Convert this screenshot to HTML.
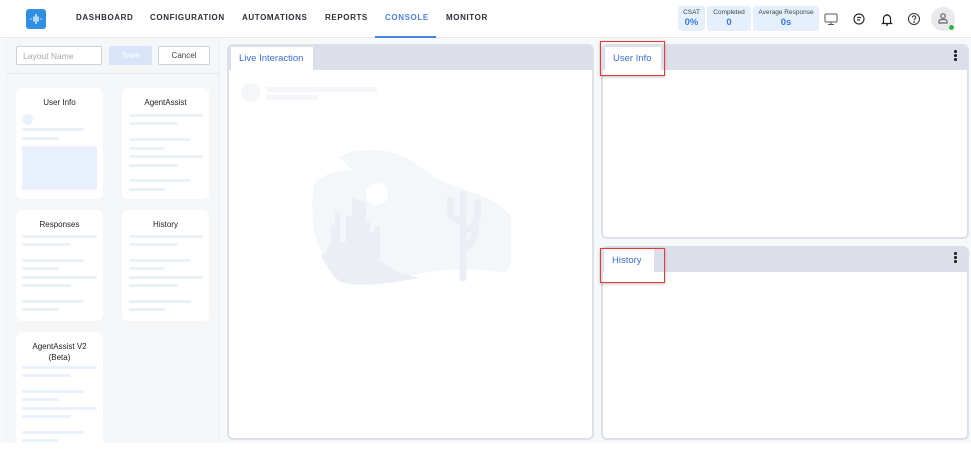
<!DOCTYPE html>
<html><head><meta charset="utf-8"><style>
*{box-sizing:border-box;margin:0;padding:0}
body{width:971px;height:451px;background:#fff;font-family:"Liberation Sans",sans-serif;position:relative;overflow:hidden}
.a{position:absolute}
.nav{position:absolute;top:13px;font-size:8px;font-weight:bold;letter-spacing:.6px;color:#2b2f38}
.stat{position:absolute;top:6px;height:25px;background:#e6f0fc;border-radius:3px;text-align:center;font-size:6.5px;color:#444;padding-top:3px}
.stat b{display:block;color:#3a7be0;font-size:9.5px;font-weight:bold;margin-top:1px}
.card{position:absolute;background:#fff;border-radius:6px;width:87px;height:111px}
.card .t{text-align:center;font-size:8px;color:#222;margin-top:9px;line-height:11px}
.ln{position:absolute;height:3px;background:#e8f1fc;border-radius:2px}
.panel{position:absolute;border:2.5px solid #dde0ea;border-radius:6px;background:#fff;overflow:hidden}
.ph{position:absolute;left:0;right:0;top:0;height:24px;background:#dcdfea}
.tab{position:absolute;top:1px;height:23px;background:#fff;font-size:9.5px;color:#3b6fd8;padding:6px 8px 0}
.red{position:absolute;border:1.5px solid #e53935;box-shadow:0 1px 3px rgba(0,0,0,.25)}
.dots{position:absolute;right:10px;top:4px;width:3px}
.dots i{display:block;width:2.5px;height:2.5px;background:#222;border-radius:50%;margin-bottom:1.5px}
</style></head><body>
<div class="a" style="left:0;top:38px;width:971px;height:405px;background:#f7f8fa"></div>
<div class="a" style="left:0;top:37px;width:971px;height:1px;background:#e6e8ee"></div>
<div class="a" style="left:26px;top:9px;width:20px;height:20px;background:#2f8fe3;border-radius:3px">
<svg width="20" height="20" viewBox="0 0 20 20"><g stroke="#fff" stroke-width="1.3" stroke-linecap="round"><path d="M5 10v0M8 8v4M10 5.5v9M12 8v4M15 10v0"/></g></svg></div>
<div class="nav" style="left:76px">DASHBOARD</div>
<div class="nav" style="left:150px">CONFIGURATION</div>
<div class="nav" style="left:242px">AUTOMATIONS</div>
<div class="nav" style="left:325px">REPORTS</div>
<div class="nav" style="left:385px;color:#4a82e0">CONSOLE</div>
<div class="nav" style="left:446px">MONITOR</div>
<div class="a" style="left:375px;top:36px;width:61px;height:1.5px;background:#4a82e0"></div>
<div class="stat" style="left:678px;width:27px">CSAT<b>0%</b></div>
<div class="stat" style="left:707px;width:44px">Completed<b>0</b></div>
<div class="stat" style="left:753px;width:66px">Average Response<b>0s</b></div>
<svg class="a" style="left:823px;top:11px" width="16" height="16" viewBox="0 0 16 16" fill="none" stroke="#555" stroke-width="1"><rect x="2" y="3" width="12" height="8" rx="1"/><path d="M8 11v2M5 13.5h6"/></svg>
<svg class="a" style="left:851px;top:11px" width="16" height="16" viewBox="0 0 16 16" fill="none" stroke="#333" stroke-width="1.2"><circle cx="8" cy="8" r="5"/><path d="M6 6.5h4M6 9h3"/></svg>
<svg class="a" style="left:879px;top:11px" width="16" height="16" viewBox="0 0 16 16" fill="none" stroke="#222" stroke-width="1.2"><path d="M4.5 11.5V7.5a3.5 3.5 0 0 1 7 0v4l1 1h-9zM7 14h2M8 3v1"/></svg>
<svg class="a" style="left:906px;top:11px" width="16" height="16" viewBox="0 0 16 16" fill="none" stroke="#333" stroke-width="1"><circle cx="8" cy="8" r="5.5"/><path d="M6.3 6.5a1.7 1.7 0 1 1 2.3 1.6c-.5.2-.6.6-.6 1.1"/><circle cx="8" cy="11" r=".4" fill="#333"/></svg>
<div class="a" style="left:931px;top:7px;width:24px;height:24px;border-radius:50%;background:#e8e9ec"></div>
<svg class="a" style="left:937px;top:12px" width="12" height="12" viewBox="0 0 12 12" fill="none" stroke="#666" stroke-width="1.2"><circle cx="6" cy="4" r="2.2"/><path d="M2 11v-1.5a2 2 0 0 1 2-2h4a2 2 0 0 1 2 2V11z"/></svg>
<div class="a" style="left:949px;top:25px;width:5px;height:5px;border-radius:50%;background:#2fb344"></div>

<div class="a" style="left:6px;top:38px;width:213px;height:405px;background:#f5f6f8"></div>
<div class="a" style="left:6px;top:73px;width:213px;height:1px;background:#e6e8ee"></div>
<div class="a" style="left:219px;top:38px;width:1px;height:405px;background:#eceef2"></div>
<div class="a" style="left:16px;top:46px;width:86px;height:19px;border:1px solid #cfd2d8;border-radius:2px;background:#fff;font-size:8.5px;color:#a6a9b0;padding:4px 6px">Layout Name</div>
<div class="a" style="left:109px;top:46px;width:43px;height:19px;background:#d8e5f8;border-radius:2px;font-size:8px;color:#fff;text-align:center;padding-top:5px">Save</div>
<div class="a" style="left:158px;top:46px;width:52px;height:19px;border:1px solid #cfd2d8;border-radius:2px;background:#fff;font-size:8px;color:#444;text-align:center;padding-top:4px">Cancel</div>

<div class="card" style="left:16px;top:88px"><div class="t">User Info</div>
<div class="a" style="left:6px;top:26px;width:11px;height:11px;border-radius:50%;background:#e8f1fc"></div>
<div class="ln" style="left:6px;top:40px;width:62px"></div><div class="ln" style="left:6px;top:49px;width:37px"></div>
<div class="a" style="left:6px;top:58px;width:75px;height:44px;background:#e8f1fc"></div></div>
<div class="card" style="left:122px;top:88px"><div class="t">AgentAssist</div>
<div class="ln" style="left:7px;top:26px;width:74px"></div><div class="ln" style="left:7px;top:34px;width:49px"></div>
<div class="ln" style="left:7px;top:50px;width:62px"></div><div class="ln" style="left:7px;top:59px;width:36px"></div>
<div class="ln" style="left:7px;top:67px;width:74px"></div><div class="ln" style="left:7px;top:76px;width:49px"></div>
<div class="ln" style="left:7px;top:91px;width:62px"></div><div class="ln" style="left:7px;top:100px;width:36px"></div></div>
<div class="card" style="left:16px;top:210px"><div class="t">Responses</div>
<div class="ln" style="left:6px;top:25px;width:75px"></div><div class="ln" style="left:6px;top:33px;width:49px"></div>
<div class="ln" style="left:6px;top:49px;width:62px"></div><div class="ln" style="left:6px;top:57px;width:37px"></div>
<div class="ln" style="left:6px;top:66px;width:75px"></div><div class="ln" style="left:6px;top:74px;width:49px"></div>
<div class="ln" style="left:6px;top:90px;width:62px"></div><div class="ln" style="left:6px;top:98px;width:37px"></div></div>
<div class="card" style="left:122px;top:210px"><div class="t">History</div>
<div class="ln" style="left:7px;top:25px;width:74px"></div><div class="ln" style="left:7px;top:33px;width:49px"></div>
<div class="ln" style="left:7px;top:49px;width:62px"></div><div class="ln" style="left:7px;top:57px;width:36px"></div>
<div class="ln" style="left:7px;top:66px;width:74px"></div><div class="ln" style="left:7px;top:74px;width:49px"></div>
<div class="ln" style="left:7px;top:90px;width:62px"></div><div class="ln" style="left:7px;top:98px;width:36px"></div></div>
<div class="card" style="left:16px;top:332px;height:111px;border-radius:6px 6px 0 0"><div class="t">AgentAssist V2<br>(Beta)</div>
<div class="ln" style="left:6px;top:34px;width:75px"></div><div class="ln" style="left:6px;top:42px;width:49px"></div>
<div class="ln" style="left:6px;top:58px;width:62px"></div><div class="ln" style="left:6px;top:66px;width:37px"></div>
<div class="ln" style="left:6px;top:75px;width:75px"></div><div class="ln" style="left:6px;top:83px;width:49px"></div>
<div class="ln" style="left:6px;top:99px;width:62px"></div><div class="ln" style="left:6px;top:107px;width:37px"></div></div>

<div class="panel" style="left:227px;top:44px;width:367px;height:396px">
<div class="ph"></div><div class="tab" style="left:2px;width:82px">Live Interaction</div>
<div class="a" style="left:12px;top:37px;width:19px;height:19px;border-radius:50%;background:#f4f6f9"></div>
<div class="ln" style="left:37px;top:41px;width:111px;background:#f4f6f9;height:5px"></div>
<div class="ln" style="left:37px;top:49px;width:52px;background:#f4f6f9;height:5px"></div>
<svg class="a" style="left:82px;top:104px" width="200" height="136" viewBox="0 0 200 136">
<path d="M3 35C0 50 0 85 10 100c15 25 45 35 75 28 40-8 70-12 110-5 10-14 12-40 5-55-10-20-40-25-65-35C110 22 100 0 60 0 40 0 30 5 28 8c5 2 10 12 15 12-5 0-30 0-40 15z" fill="#f4f7fa"/>
<circle cx="66" cy="44" r="11" fill="#fff"/>
<path d="M20 90V75h4V62h5v30h6V66h6V48l14 4v20h4v10h4V76h6v35l20 12 20 5c-30 5-60 10-80 4C20 125 12 110 10 105l5-2z" fill="#ebeff5"/>
<path d="M152 128V44M152 70c-10 0-13 0-13-20M152 80c10 0 15-6 15-28M152 98c8-3 12-10 13-20" stroke="#ebeff5" stroke-width="7" stroke-linecap="round" fill="none"/>
</svg></div>

<div class="panel" style="left:601px;top:44px;width:368px;height:195px">
<div class="ph"></div><div class="tab" style="left:2px;width:56px">User Info</div><div class="dots"><i></i><i></i><i></i></div></div>
<div class="red" style="left:600px;top:41px;width:65px;height:35px"></div>
<div class="panel" style="left:601px;top:246px;width:368px;height:194px">
<div class="ph"></div><div class="tab" style="left:1px;width:50px">History</div><div class="dots"><i></i><i></i><i></i></div></div>
<div class="red" style="left:600px;top:248px;width:65px;height:35px"></div>
</body></html>
